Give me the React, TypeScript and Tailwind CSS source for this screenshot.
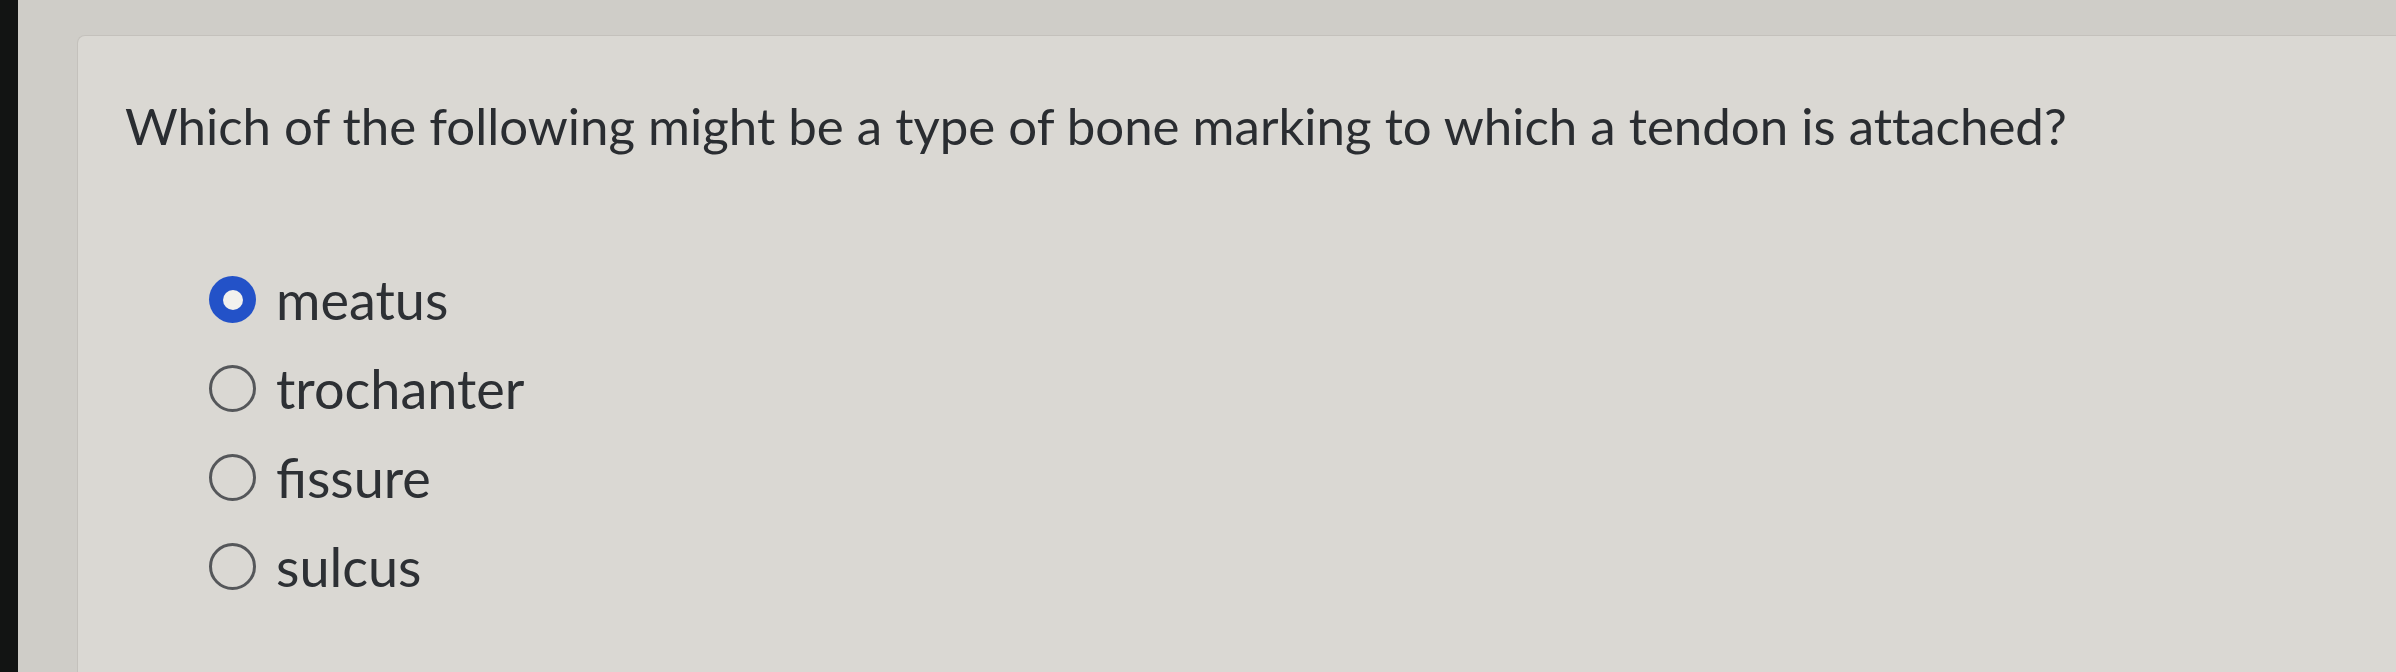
import React from "react";

const options = [
  { label: "meatus", checked: true },
  { label: "trochanter", checked: false },
  { label: "fissure", checked: false },
  { label: "sulcus", checked: false },
];

function Radio({ checked }: { checked: boolean }) {
  if (checked) {
    return (
      <span className="flex h-[47px] w-[47px] shrink-0 items-center justify-center rounded-full bg-[#2352c8]">
        <span className="h-[20px] w-[20px] rounded-full bg-[#f2f1ee]" />
      </span>
    );
  }
  return (
    <span className="h-[47px] w-[47px] shrink-0 rounded-full border-[3px] border-[#55575a]" />
  );
}

export default function App() {
  return (
    <div
      className="flex h-[672px] w-[2396px] overflow-hidden bg-[#cfcdc8]"
      style={{ fontFamily: "Lato, 'Open Sans', sans-serif" }}
    >
      <div className="w-[18px] shrink-0 bg-[#121413]" />
      <div className="flex-1 pl-[59px] pt-[35px]">
        <div className="h-full rounded-tl-lg border-l border-t border-[#c4c1bc] bg-[#dad8d3] pl-[47px] pt-[58px] text-[#2a2d31]">
          <h1 className="text-[51px] leading-[64px] [font-variant-ligatures:no-common-ligatures]">
            Which of the following might be a type of bone marking to which a tendon is attached?
          </h1>
          <ul className="mt-[118px] flex flex-col gap-[42px] pl-[84px]">
            {options.map((o) => (
              <li key={o.label} className="flex h-[47px] items-center gap-[20px]">
                <Radio checked={o.checked} />
                <span className="text-[54px] leading-[47px] text-[#2d3034]">{o.label}</span>
              </li>
            ))}
          </ul>
        </div>
      </div>
    </div>
  );
}
